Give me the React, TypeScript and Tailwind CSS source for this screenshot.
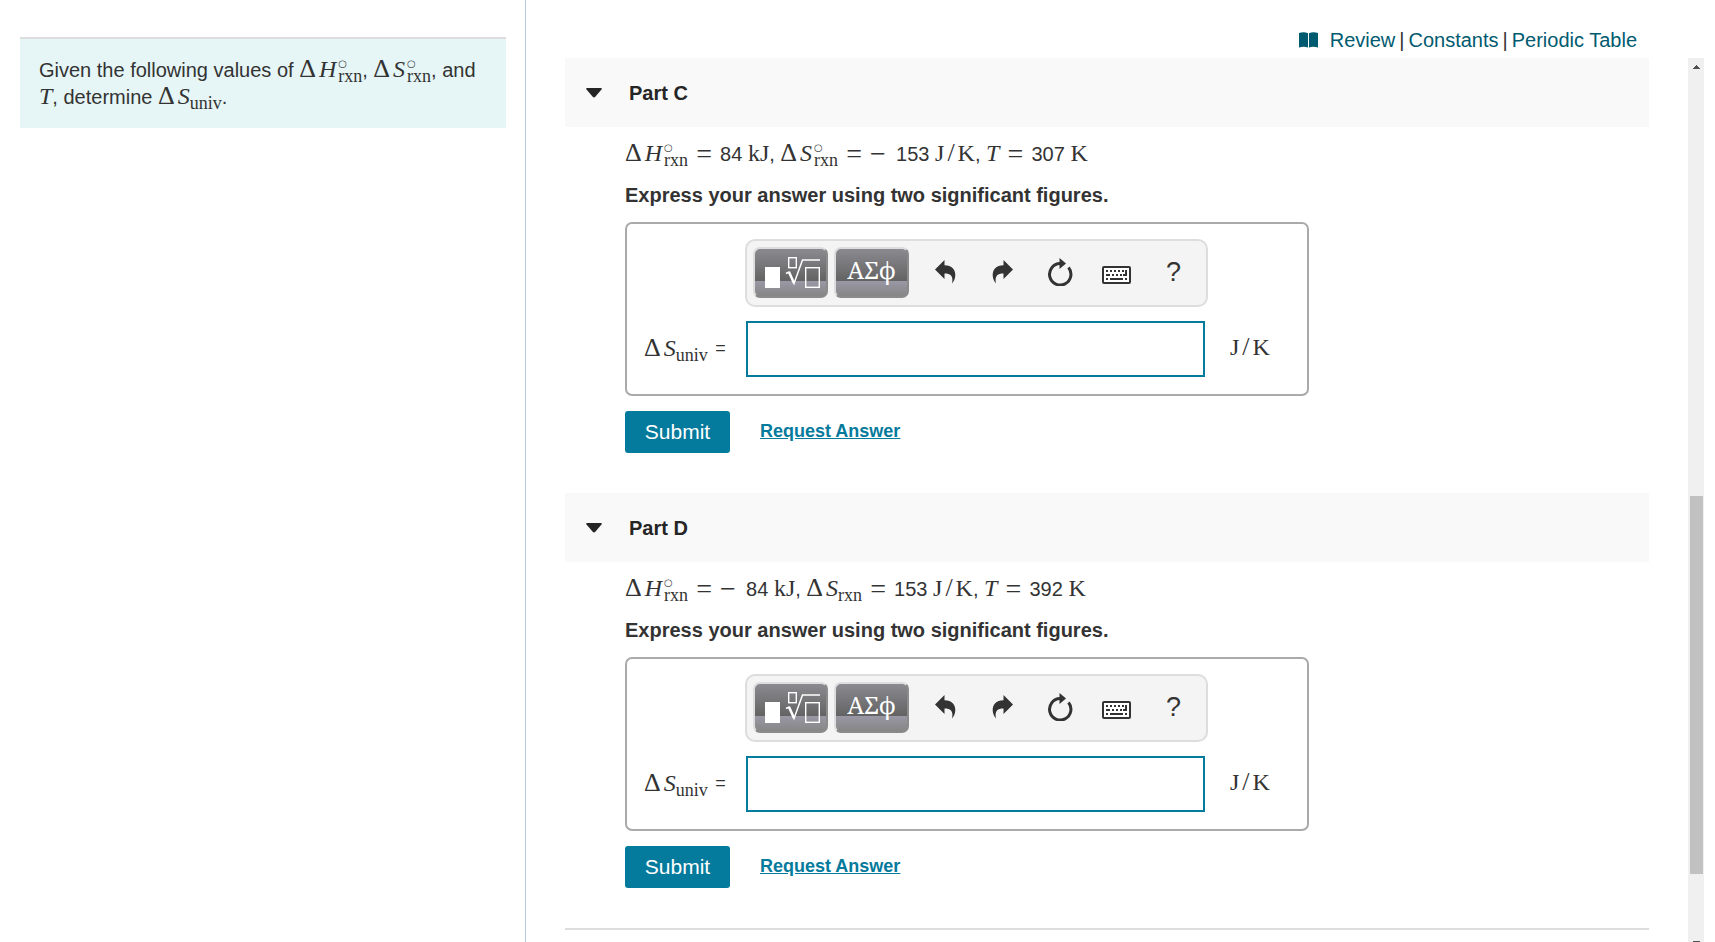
import { useState } from "react";
import type { ReactNode } from "react";

// ── Math notation ─────────────────────────────────────────────────────────────

function Rm({ children }: { children: ReactNode }) {
  return <span className="font-['Liberation_Serif',serif] text-2xl leading-none">{children}</span>;
}

function It({ children }: { children: ReactNode }) {
  return <span className="font-['Liberation_Serif',serif] text-2xl leading-none italic">{children}</span>;
}

function JoulesPerKelvin() {
  return (
    <Rm>
      J<span className="mx-[3px] text-[26px] leading-none">/</span>K
    </Rm>
  );
}

function Equals() {
  return (
    <span className="inline-block w-8 text-center align-[-2px] font-['Liberation_Serif',serif] text-[28px] leading-none">=</span>
  );
}

function Minus() {
  return (
    <span className="inline-block w-[26px] align-[-2px] font-['Liberation_Serif',serif] text-[28px] leading-none">−</span>
  );
}

function Delta({ of, sub, standard }: { of: string; sub: string; standard?: boolean }) {
  return (
    <span className="font-['Liberation_Serif',serif] text-2xl leading-none whitespace-nowrap">
      <span className="mr-[3px] text-[26px] leading-none">Δ</span>
      <i>{of}</i>
      {standard && (
        <sup className="top-0 inline-block w-0 pl-0.5 align-[10px] font-['DejaVu_Sans',sans-serif] text-[10px] leading-none">○</sup>
      )}
      <sub className="text-lg leading-none">{sub}</sub>
    </span>
  );
}

// ── Toolbar icons ─────────────────────────────────────────────────────────────

function UndoIcon() {
  return (
    <svg width="21" height="24" viewBox="0 0 21 24" fill="#333" aria-hidden="true">
      <path d="M0 9.5 9.5 0v5.2C17 5.2 20.5 10 20.3 15.5c-.1 3.2-1.5 6-3.3 8 .8-3.5.5-6.3-1-7.900-1.400-1.500-3.500-2-6.500-2V19z" />
    </svg>
  );
}

function RedoIcon() {
  return (
    <svg width="21" height="24" viewBox="0 0 21 24" fill="#333" aria-hidden="true">
      <path d="M21 9.5 11.5 0v5.2C4 5.2.5 10 .7 15.5c.1 3.2 1.5 6 3.3 8-.8-3.500-.5-6.300 1-7.900 1.400-1.500 3.500-2 6.500-2V19z" />
    </svg>
  );
}

function ResetIcon() {
  return (
    <svg width="26" height="28" viewBox="0 0 26 28" aria-hidden="true">
      <path d="M14 5.600h-1A10.700 10.700 0 1 0 21.500 9.500" fill="none" stroke="#333" strokeWidth="3" />
      <path d="M12.500 0 19 5.600 12.500 11z" fill="#333" />
    </svg>
  );
}

function KeyboardIcon() {
  return (
    <svg width="29" height="18" viewBox="0 0 29 18" aria-hidden="true">
      <rect x="1" y="1" width="27" height="16" rx="1" fill="#fff" stroke="#333" strokeWidth="2" />
      <path
        fill="#333"
        d="M4 4h2v2H4zM8 4h2v2H8zM12 4h2v2h-2zM16 4h2v2h-2zM20 4h2v2h-2zM4 8h4v2H4zM10 8h2v2h-2zM14 8h2v2h-2zM18 8h2v2h-2zM21 8h2V4h2v6h-4zM4 12h2v2H4zM8 12h13v2H8zM23 12h2v2h-2z"
      />
    </svg>
  );
}

function TemplatesIcon() {
  return (
    <svg width="56" height="33" viewBox="0 0 56 33" fill="none" stroke="#fff" aria-hidden="true">
      <rect x="0" y="11" width="15" height="21" fill="#fff" stroke="none" />
      <rect x="23.700" y="1.700" width="7.600" height="10" strokeWidth="1.400" />
      <path d="M21 17.500l3-1.500 5 11.500L37.500 4H55" strokeWidth="1.500" />
      <path d="M24 16l5 11" strokeWidth="2.500" />
      <rect x="40.700" y="11.700" width="13.600" height="19.600" strokeWidth="1.400" />
    </svg>
  );
}

function BookIcon() {
  return (
    <svg width="19" height="16" viewBox="0 0 19 16" fill="#005a70" aria-hidden="true">
      <path d="M0 1C3 0 6.500 0 9 1.200V15.500C6.500 14.600 3 14.600 0 15.500zM10 1.200C12.500 0 16 0 19 1v14.500c-3-.9-6.500-.9-9 0z" />
    </svg>
  );
}

// ── Answer box ────────────────────────────────────────────────────────────────

const MATH_BUTTON =
  "flex h-[51px] w-[75px] items-center justify-center rounded-[7px] border-2 border-t-[#ddd] border-l-[#ddd] border-r-[#8b8b8b] border-b-[#8b8b8b] bg-[linear-gradient(#8b8a90,#636363_68%,#9a98a5_68%,#868686)] text-white";
const ICON_BUTTON = "flex h-10 w-[57px] items-center justify-center";

function Toolbar() {
  return (
    <div className="flex h-[68px] w-[463px] items-center rounded-[10px] border-2 border-[#ddd] bg-[#f4f4f4] pb-0.5 pl-1.5">
      <button type="button" aria-label="Templates" className={`${MATH_BUTTON} pl-1`}>
        <TemplatesIcon />
      </button>
      <button type="button" className={`${MATH_BUTTON} ml-1.5 pb-1 font-['Noto_Serif','Liberation_Serif',serif] text-2xl`}>
        ΑΣϕ
      </button>
      <div className="ml-2 flex">
        <button type="button" aria-label="Undo" className={ICON_BUTTON}><UndoIcon /></button>
        <button type="button" aria-label="Redo" className={ICON_BUTTON}><RedoIcon /></button>
        <button type="button" aria-label="Reset" className={ICON_BUTTON}><ResetIcon /></button>
        <button type="button" aria-label="Keyboard shortcuts" className={`${ICON_BUTTON} pt-1.5`}><KeyboardIcon /></button>
        <button type="button" aria-label="Help" className={`${ICON_BUTTON} text-[27px]`}>?</button>
      </div>
    </div>
  );
}

function AnswerBox({ id }: { id: string }) {
  const [value, setValue] = useState("");
  return (
    <div className="mt-[13px] w-[684px] rounded-[7px] border-2 border-[#aaa] pt-[15px] pb-[17px]">
      <div className="pl-[118px]">
        <Toolbar />
      </div>
      <div className="mt-3.5 flex items-center">
        <label htmlFor={id} className="w-[119px] pl-[17px] whitespace-nowrap">
          <Delta of="S" sub="univ" /> <span className="ml-0.5 align-[2px] text-lg">=</span>
        </label>
        <input
          id={id}
          value={value}
          onChange={(e) => setValue(e.target.value)}
          className="h-14 w-[459px] border-2 border-[#047a9c] bg-white px-3 outline-none"
        />
        <span className="ml-[25px] pb-0.5"><JoulesPerKelvin /></span>
      </div>
    </div>
  );
}

// ── Part ──────────────────────────────────────────────────────────────────────

function Part({ name, children }: { name: string; children: ReactNode }) {
  const [open, setOpen] = useState(true);
  const id = `answer-${name.toLowerCase()}`;
  return (
    <section className={open ? "pb-10" : ""}>
      <h2 className="bg-[#f9f9f9]">
        <button
          type="button"
          aria-expanded={open}
          onClick={() => setOpen(!open)}
          className="flex h-[69px] w-full items-center pl-[21px] text-left text-[20px] font-bold text-[#252525]"
        >
          <svg width="16" height="10" viewBox="0 0 16 10" fill="#252525" aria-hidden="true">
            <path d="M1 0h14q1.300.3.500 1.500L9.300 8.800Q8 10 6.700 8.800L.5 1.500Q-.3.300 1 0z" />
          </svg>
          <span className="ml-[27px]">Part {name}</span>
        </button>
      </h2>
      {open && (
        <div className="pl-[60px]">
          <p className="mt-[11px] h-8 leading-8 whitespace-nowrap">{children}</p>
          <p className="mt-[11px] h-7 text-[20px] leading-7 font-bold">Express your answer using two significant figures.</p>
          <AnswerBox id={id} />
          <div className="mt-[15px] flex items-center">
            <button type="button" className="h-[42px] w-[105px] rounded-[3px] bg-[#047a9c] text-[21px] text-white">
              Submit
            </button>
            <a href="#request" className="ml-[30px] pb-0.5 text-lg leading-5 font-bold text-[#047a9c] underline">Request Answer</a>
          </div>
        </div>
      )}
    </section>
  );
}

function ScrollRail() {
  return (
    <div className="flex w-4 shrink-0 flex-col items-center bg-[#f0f0f0]" aria-hidden="true">
      <svg width="7" height="4" viewBox="0 0 7 4" className="mt-[7px] shrink-0" fill="#505050">
        <path d="M3 0h1v1h1v1h1v1h1v1H0V3h1V2h1V1h1z" />
      </svg>
      <div className="flex-[427]" />
      <div className="w-[13px] flex-[378] bg-[#c1c1c1]" />
      <div className="flex-[67]" />
      <div className="h-px w-[7px] bg-[#505050]" />
    </div>
  );
}

export default function App() {
  return (
    <div className="flex h-screen overflow-hidden bg-white font-['Liberation_Sans',Arial,sans-serif] text-[20px] text-[#333]">
      <aside className="w-[526px] shrink-0 border-r border-[#b4cbdf] pt-[37px] pr-[19px] pl-5">
        <div className="border-t-2 border-[#ddd] bg-[#e6f6f6] pt-[17px] pr-7 pb-[18px] pl-[19px]">
          <p className="leading-[26px]">
            Given the following values of <Delta of="H" sub="rxn" standard />, <Delta of="S" sub="rxn" standard />, and{" "}
            <It>T</It>, determine <Delta of="S" sub="univ" />.
          </p>
        </div>
      </aside>

      <main className="flex min-w-0 flex-1 flex-col pr-[11px]">
        <nav className="flex h-[58px] shrink-0 items-center justify-end gap-1 pt-[22px] pr-[67px]">
          <a href="#review" className="flex items-center gap-3 text-[#005a70]">
            <BookIcon />
            Review
          </a>
          <span>|</span>
          <a href="#constants" className="text-[#005a70]">Constants</a>
          <span>|</span>
          <a href="#periodic-table" className="text-[#005a70]">Periodic Table</a>
        </nav>
        <div className="flex min-h-0 flex-1">
          <div className="min-w-0 flex-1 overflow-hidden px-[39px]">
            <Part name="C">
              <Delta of="H" sub="rxn" standard /><Equals />84 <Rm>kJ</Rm>, <Delta of="S" sub="rxn" standard />
              <Equals /><Minus />153 <JoulesPerKelvin />, <It>T</It><Equals />307 <Rm>K</Rm>
            </Part>
            <Part name="D">
              <Delta of="H" sub="rxn" standard /><Equals /><Minus />84 <Rm>kJ</Rm>, <Delta of="S" sub="rxn" />
              <Equals />153 <JoulesPerKelvin />, <It>T</It><Equals />392 <Rm>K</Rm>
            </Part>
            <hr className="border-t-2 border-[#ddd]" />
          </div>
          <ScrollRail />
        </div>
      </main>
    </div>
  );
}
